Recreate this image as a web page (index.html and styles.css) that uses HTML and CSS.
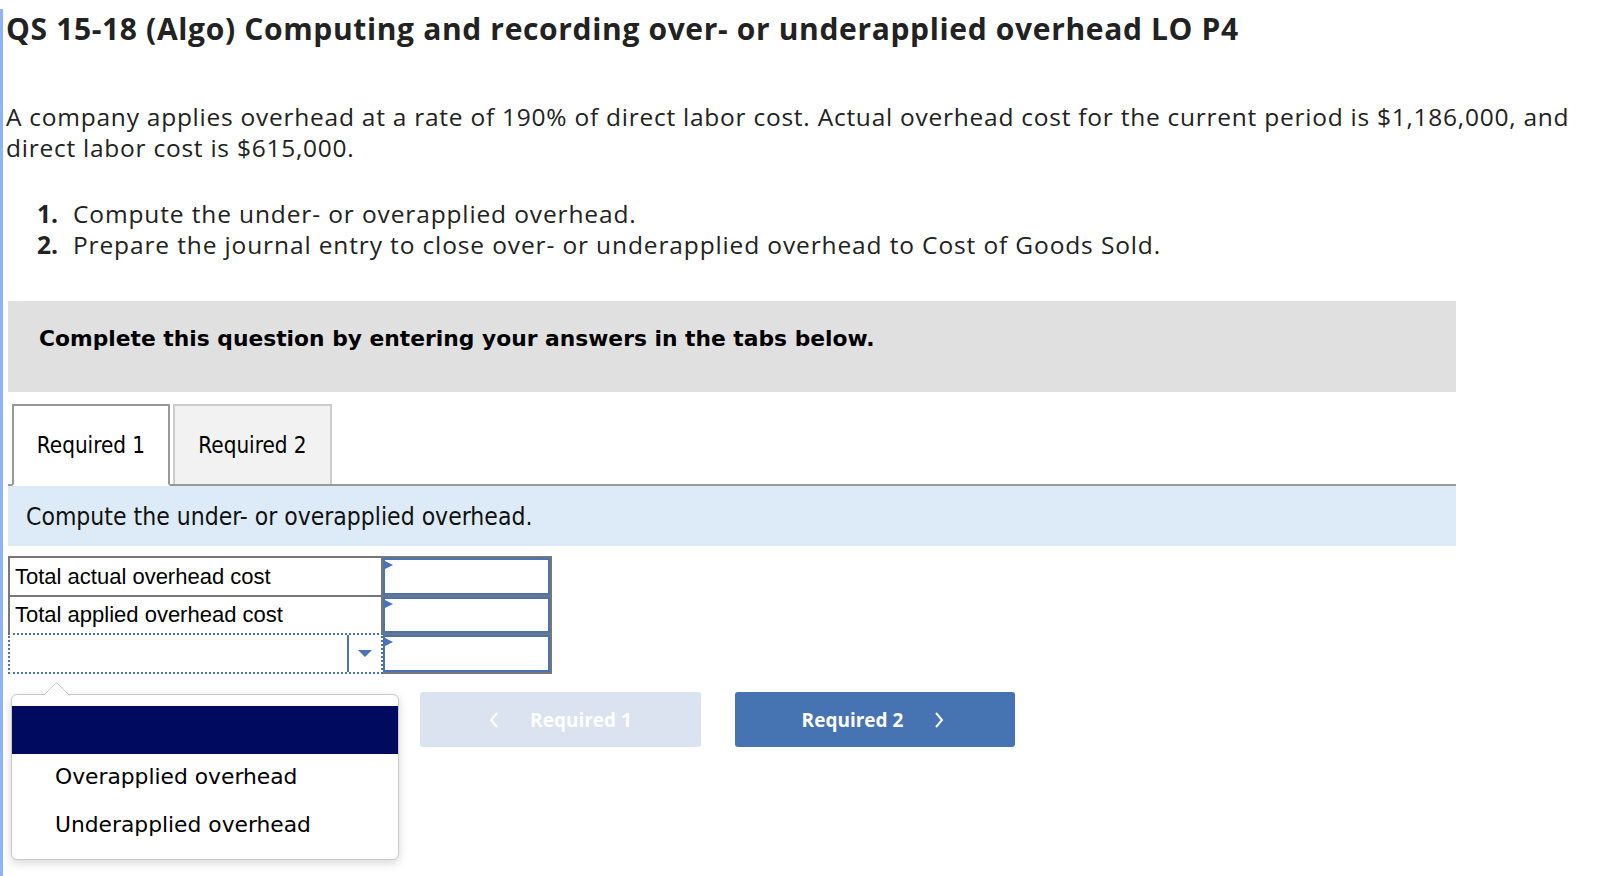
FILE: index.html
```html
<!DOCTYPE html>
<html lang="en">
<head>
<meta charset="utf-8">
<title>QS 15-18 (Algo)</title>
<link rel="stylesheet" href="styles.css">
</head>
<body>
<div class="page">
  <h1 class="title">QS 15-18 (Algo) Computing and recording over- or underapplied overhead LO P4</h1>
  <p class="intro">A company applies overhead at a rate of 190% of direct labor cost. Actual overhead cost for the current period is $1,186,000, and<br>direct labor cost is $615,000.</p>
  <ol class="steps">
    <li><span class="n">1.</span><span>Compute the under- or overapplied overhead.</span></li>
    <li><span class="n">2.</span><span>Prepare the journal entry to close over- or underapplied overhead to Cost of Goods Sold.</span></li>
  </ol>
  <div class="quiz">
    <div class="notice">Complete this question by entering your answers in the tabs below.</div>
    <div class="tabs">
      <div class="tab on">Required 1</div>
      <div class="tab off">Required 2</div>
    </div>
    <div class="band">Compute the under- or overapplied overhead.</div>
    <div class="work">
      <div class="row">
        <div class="label">Total actual overhead cost</div>
        <div class="cell"><div class="field"></div></div>
      </div>
      <div class="row">
        <div class="label">Total applied overhead cost</div>
        <div class="cell"><div class="field"></div></div>
      </div>
      <div class="row pickrow">
        <div class="pick"><div class="arrow"><span class="caret"></span></div></div>
        <div class="cell"><div class="field"></div></div>
      </div>
      <div class="popup">
        <svg class="tip" width="28" height="14" viewBox="0 0 28 14"><polygon points="0.5,14 13.5,1 26.5,14" fill="#fff"/><polyline points="0.5,13.5 13.5,0.5 26.5,13.5" fill="none" stroke="#c9c9c9" stroke-width="1"/></svg>
        <div class="opt hl"></div>
        <div class="opt">Overapplied overhead</div>
        <div class="opt">Underapplied overhead</div>
      </div>
      <div class="nav">
        <div class="btn prev">
          <svg width="10" height="16" viewBox="0 0 10 16"><polyline points="8,1 2,8 8,15" fill="none" stroke="#fff" stroke-width="2"/></svg>
          <span>Required 1</span>
        </div>
        <div class="btn next">
          <span>Required 2</span>
          <svg width="10" height="16" viewBox="0 0 10 16"><polyline points="2,1 8,8 2,15" fill="none" stroke="#fff" stroke-width="2"/></svg>
        </div>
      </div>
    </div>
  </div>
</div>
</body>
</html>
```
FILE: styles.css
```css
* { box-sizing: border-box; }
html, body { margin: 0; padding: 0; background: #fff; }
body { color: #222; font-family: "Open Sans", sans-serif; }

.page {
  min-height: 876px;
  border-left: 3px solid #8fb4f4;
  padding: 0 0 0 3px;
}

.title {
  margin: 9px 0 0;
  font: 700 30px/40px "Open Sans", sans-serif;
  letter-spacing: 0.65px;
  color: #222;
}

.intro {
  margin: 52px 0 0;
  font: 400 24.5px/31px "Open Sans", sans-serif;
  letter-spacing: 0.75px;
}

.steps {
  list-style: none;
  margin: 35px 0 0;
  padding: 0;
  font: 400 24.5px/31px "Open Sans", sans-serif;
  letter-spacing: 0.87px;
}
.steps li {
  display: grid;
  grid-template-columns: 52px auto;
  column-gap: 15px;
}
.steps .n { font-weight: 700; text-align: right; letter-spacing: 0; }

.quiz { width: 1448px; margin: 41px 0 0 2px; }

.notice {
  height: 91px;
  background: #e0e0e0;
  padding: 25px 0 0 31px;
  font: 700 21.8px/25px "DejaVu Sans", sans-serif;
  color: #000;
}

.tabs {
  display: flex;
  align-items: flex-start;
  height: 82px;
  margin-top: 12px;
  padding-left: 4px;
  border-bottom: 2px solid #999;
}
.tab {
  display: flex;
  align-items: center;
  justify-content: center;
  font: 400 22.3px/26px "DejaVu Sans Condensed", "DejaVu Sans", sans-serif;
  color: #000;
}
.tab.on {
  width: 158px;
  height: 82px;
  border: 2px solid #999;
  border-bottom-color: #fff;
  background: #fff;
}
.tab.off {
  width: 159px;
  height: 80px;
  margin-left: 3px;
  border: 2px solid #ccc;
  border-bottom: 0;
  background: #f2f2f2;
}

.band {
  height: 60px;
  background: #ddebf8;
  padding: 17px 0 0 18px;
  font: 400 24.5px/28px "DejaVu Sans Condensed", "DejaVu Sans", sans-serif;
  color: #111;
}

.work { position: relative; margin-top: 10px; }

.row { display: flex; height: 41px; }
.row + .row { margin-top: -2px; }
.row:nth-child(2) { height: 40px; }

.label {
  width: 375px;
  border: 2px solid #777;
  padding-left: 5px;
  display: flex;
  align-items: center;
  font: 400 22px/24px "Liberation Sans", Arial, sans-serif;
  color: #000;
}

.cell {
  width: 171px;
  margin-left: -2px;
  border: 2px solid #777;
}
.field {
  height: 100%;
  border: 2px solid #4a73b5;
  position: relative;
}
.field::before {
  content: "";
  position: absolute;
  left: 0;
  top: 1px;
  border-left: 8px solid #4a73b5;
  border-top: 4.5px solid transparent;
  border-bottom: 4.5px solid transparent;
}

.pick {
  width: 375px;
  border: 2px dotted #4a73b5;
  background: #fff;
  display: flex;
  justify-content: flex-end;
}
.pickrow .cell { margin-left: 0; width: 169px; border-left: 0; }
.arrow {
  width: 34px;
  border-left: 2px solid #4a73b5;
  display: flex;
  align-items: center;
  justify-content: center;
}
.caret {
  width: 0;
  height: 0;
  border-top: 7px solid #4a73b5;
  border-left: 7.5px solid transparent;
  border-right: 7.5px solid transparent;
}

.popup {
  position: absolute;
  left: 3px;
  top: 138px;
  width: 388px;
  height: 166px;
  padding-top: 11px;
  background: #fff;
  border: 1px solid #c9c9c9;
  border-radius: 6px;
  box-shadow: 0 3px 10px rgba(0, 0, 0, 0.16);
  z-index: 2;
}
.tip {
  position: absolute;
  left: 31px;
  top: -13px;
  display: block;
}
.opt {
  height: 48px;
  padding-left: 43px;
  font: 400 21.8px/45px "DejaVu Sans", sans-serif;
  color: #000;
}
.opt.hl { background: #000a5e; }

.nav {
  display: flex;
  gap: 34px;
  margin-top: 18px;
  padding-left: 412px;
}
.btn {
  height: 55px;
  border-radius: 3px;
  display: flex;
  align-items: center;
  justify-content: center;
  font: 700 19px/24px "Open Sans", sans-serif;
  color: #fff;
}
.btn.prev { width: 281px; gap: 31px; background: #dae3ef; }
.btn.next { width: 280px; gap: 31px; padding-right: 4px; background: #4674b2; }
```
